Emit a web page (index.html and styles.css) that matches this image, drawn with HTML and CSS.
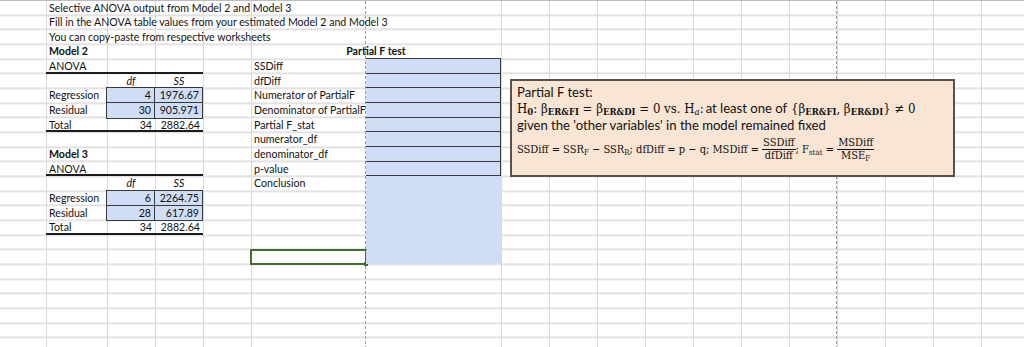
FILE: index.html
```html
<!DOCTYPE html>
<html lang="en">
<head>
  <meta charset="UTF-8" />
  <title>Partial F test</title>
  <link rel="stylesheet" href="styles.css">
</head>
<body>

<div class="sheet">
  <div class="row first"><div></div><div class="t">Selective ANOVA output from Model 2 and Model 3</div></div>
  <div class="row"><div></div><div class="t">Fill in the ANOVA table values from your estimated Model 2 and Model 3</div></div>
  <div class="row"><div></div><div class="t">You can copy-paste from respective worksheets</div></div>
  <div class="row"><div></div><div class="t b">Model 2</div><div></div><div></div><div></div><div class="t b fg">Partial F test</div></div>
  <div class="row"><div></div><div class="t bb">ANOVA</div><div class="bb"></div><div class="bb"></div><div></div><div class="t">SSDiff</div><div class="box"></div></div>
  <div class="row"><div></div><div></div><div class="t i c">df</div><div class="t i c">SS</div><div></div><div class="t">dfDiff</div><div class="box"></div></div>
  <div class="row"><div></div><div class="t">Regression</div><div class="t n in">4</div><div class="t n in">1976.67</div><div></div><div class="t">Numerator of PartialF</div><div class="box"></div></div>
  <div class="row"><div></div><div class="t">Residual</div><div class="t n in">30</div><div class="t n in">905.971</div><div></div><div class="t">Denominator of PartialF</div><div class="box"></div></div>
  <div class="row"><div></div><div class="t bb">Total</div><div class="t n bb">34</div><div class="t n bb">2882.64</div><div></div><div class="t">Partial F_stat</div><div class="box"></div></div>
  <div class="row"><div></div><div></div><div></div><div></div><div></div><div class="t">numerator_df</div><div class="box"></div></div>
  <div class="row"><div></div><div class="t b">Model 3</div><div></div><div></div><div></div><div class="t">denominator_df</div><div class="box"></div></div>
  <div class="row"><div></div><div class="t bb">ANOVA</div><div class="bb"></div><div class="bb"></div><div></div><div class="t">p-value</div><div class="box"></div></div>
  <div class="row"><div></div><div></div><div class="t i c">df</div><div class="t i c">SS</div><div></div><div class="t">Conclusion</div><div class="fill"></div></div>
  <div class="row"><div></div><div class="t">Regression</div><div class="t n in">6</div><div class="t n in">2264.75</div><div></div><div></div><div class="fill"></div></div>
  <div class="row"><div></div><div class="t">Residual</div><div class="t n in">28</div><div class="t n in">617.89</div><div></div><div></div><div class="fill"></div></div>
  <div class="row"><div></div><div class="t bb">Total</div><div class="t n bb">34</div><div class="t n bb">2882.64</div><div></div><div></div><div class="fill"></div></div>
  <div class="row"><div></div><div></div><div></div><div></div><div></div><div></div><div class="fill"></div></div>
  <div class="row"><div></div><div></div><div></div><div></div><div></div><div class="sel"></div><div class="fill"></div></div>

  <!-- text box floating over the grid -->
  <div class="note">
    <p class="note-title">Partial F test:</p>
    <p class="math h0">H<sub class="sb">0</sub>: β<sub class="sb">ER&amp;FI</sub> = β<sub class="sb">ER&amp;DI</sub> = 0 vs. H<sub><i>a</i></sub>:<span class="plain">at least one of</span> {β<sub class="sb">ER&amp;FI</sub>, β<sub class="sb">ER&amp;DI</sub>} ≠ 0</p>
    <p class="note-text">given the 'other variables' in the model remained fixed</p>
    <p class="math formula">SSDiff = SSR<sub>F</sub> − SSR<sub>R</sub>; dfDiff = p − q; MSDiff = <span class="frac"><span>SSDiff</span><span>dfDiff</span></span>; F<sub>stat</sub> = <span class="frac"><span>MSDiff</span><span>MSE<sub>F</sub></span></span></p>
  </div>
</div>

</body>
</html>
```

FILE: styles.css
```css
body {
  margin: 0;
  background: #fff;
  overflow: hidden;
}

.sheet {
  position: relative;
  height: 346px;
  border-top: 1px solid #bdbdbd;
  font-family: Lato, "Liberation Sans", sans-serif;
  font-size: 10.6px;
  color: #111;
  overflow: hidden;
  /* gridlines: page breaks, column lines, row lines */
  background:
    repeating-linear-gradient(to bottom, #9c9c9c 0 3px, transparent 3px 5px) 365px 0 / 1px 100% no-repeat,
    repeating-linear-gradient(to bottom, #9c9c9c 0 3px, transparent 3px 5px) 836px 0 / 1px 100% no-repeat,
    linear-gradient(#d9d9d9, #d9d9d9) 46px 0 / 1px 100% no-repeat,
    linear-gradient(#d9d9d9, #d9d9d9) 107px 0 / 1px 100% no-repeat,
    linear-gradient(#d9d9d9, #d9d9d9) 155px 0 / 1px 100% no-repeat,
    linear-gradient(#d9d9d9, #d9d9d9) 203px 0 / 1px 100% no-repeat,
    linear-gradient(#d9d9d9, #d9d9d9) 251px 0 / 1px 100% no-repeat,
    linear-gradient(#d9d9d9, #d9d9d9) 501px 0 / 1px 100% no-repeat,
    repeating-linear-gradient(to right, #d9d9d9 0 1px, transparent 1px 48px) 549px 0 / 475px 100% no-repeat,
    repeating-linear-gradient(to bottom, transparent 0 12.667px, #e2e2e2 12.667px 14.667px) 0 0.333px;
}

/* green marker over the active column header */
.sheet::before {
  content: "";
  position: absolute;
  left: 251px;
  top: -1px;
  width: 115px;
  height: 1px;
  background: #217346;
}

.row {
  display: grid;
  grid-template-columns: 46px 61px 48px 48px 48px 115px 135px;
  height: 14.667px;
}

.row.first {
  height: 14px;
}

.row > div {
  position: relative;
  line-height: 14.667px;
  white-space: nowrap;
}

.t {
  padding: 0 3px;
}

.b {
  font-weight: bold;
}

.i {
  font-style: italic;
}

.c {
  text-align: center;
}

.n {
  text-align: right;
}

.fg {
  grid-column: 6 / span 2;
  text-align: center;
}

/* thick bottom border of the ANOVA tables */
.bb {
  box-shadow: inset 0 -2px 0 #1c1c1c;
}

/* input cells */
.in {
  background: #cfddf6;
  border: 1px solid #383838;
  margin: -1px 0 0 -1px;
}

.box {
  background: #cfddf6;
  border: 1px solid #383838;
  border-left: 0;
  margin-top: -1px;
}

.fill {
  background: #cfddf6;
}

.sel {
  border: 2px solid #3f6f2e;
  margin: -1px -1px -1px -1px;
}

.sel::after {
  content: "";
  position: absolute;
  right: -3px;
  bottom: -3px;
  width: 4px;
  height: 4px;
  background: #3f6f2e;
}

/* floating text box */
.note {
  position: absolute;
  left: 510px;
  top: 78px;
  width: 436px;
  height: 91px;
  padding: 3px 0 0 5px;
  background: #f9e5d3;
  border: 2px solid #5b5048;
  color: #111;
  font-size: 13.1px;
}

.note p {
  margin: 0;
  line-height: 16px;
  white-space: nowrap;
}

.math {
  font-family: "DejaVu Serif Condensed", "Liberation Serif", serif;
  font-stretch: condensed;
}

.math sub {
  font-size: 0.72em;
  line-height: 0;
  vertical-align: -0.25em;
}

.math .sb {
  font-weight: bold;
}

.plain {
  font-family: Lato, "Liberation Sans", sans-serif;
  font-stretch: normal;
  margin-left: 2px;
}

.formula {
  font-size: 11px;
  margin-top: 4px !important;
}

.frac {
  display: inline-flex;
  flex-direction: column;
  align-items: center;
  vertical-align: middle;
  line-height: 1.1;
}

.frac > span:first-child {
  border-bottom: 1px solid #111;
  padding: 0 1px;
}
```
